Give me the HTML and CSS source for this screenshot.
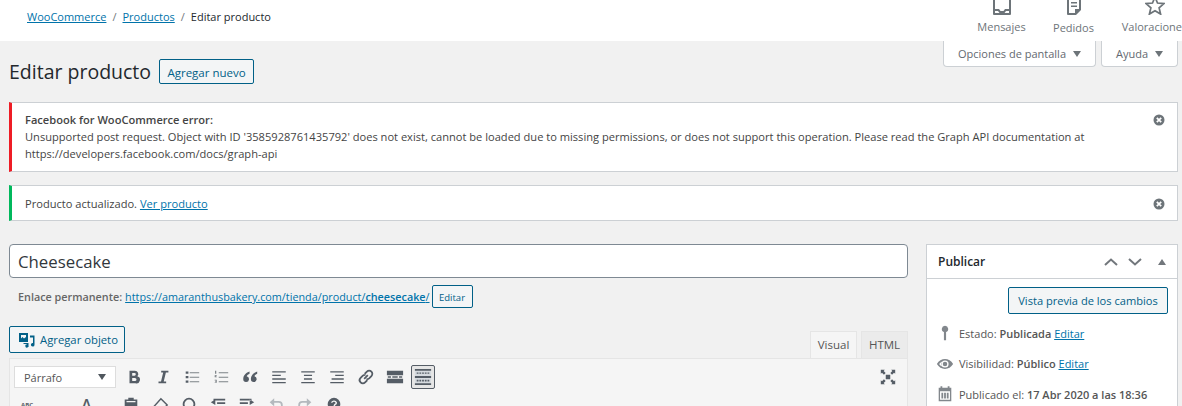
FILE: index.html
```html
<!DOCTYPE html>
<html lang="es">
<head>
  <meta charset="UTF-8" />
  <title>Editar producto</title>
  <link rel="stylesheet" href="styles.css">
</head>
<body>

<header class="topbar">
  <nav class="crumbs">
    <a href="#">WooCommerce</a><span class="sep">/</span><a href="#">Productos</a><span class="sep">/</span><span>Editar producto</span>
  </nav>
  <div class="activity">
    <div class="activity-item item-msg">
      <svg class="activity-icon" viewBox="0 -5 20 20"><path d="M2 -3h16a1 1 0 0 1 1 1v16a1 1 0 0 1-1 1H2a1 1 0 0 1-1-1V-2a1 1 0 0 1 1-1zM3 -1v10h4l1.500 2h3L13 9h4V-1zM3 11v2h14v-2h-3l-1.500 2h-5L6 11z" fill="#6d7479" fill-rule="evenodd"/></svg>
      <span>Mensajes</span>
    </div>
    <div class="activity-item item-ped">
      <svg class="activity-icon" viewBox="0 -5 20 20"><path d="M3 -4h14v14l-5 5H4a1 1 0 0 1-1-1zM5 -2v15h6V9h4V-2zM7 2h6v1.500H7zM7 5.500h6V7H7z" fill="#6d7479" fill-rule="evenodd"/></svg>
      <span>Pedidos</span>
    </div>
    <div class="activity-item item-val">
      <svg class="activity-icon" viewBox="0 -5 20 20"><path d="M10 -3l2.500 6 6.500.6-4.900 4.200 1.500 6.300L10 10.700l-5.600 3.400 1.500-6.300L1 3.600 7.500 3z" fill="none" stroke="#6d7479" stroke-width="1.700"/></svg>
      <span>Valoraciones</span>
    </div>
  </div>
</header>

<main class="wrap">
  <div class="head-row">
    <h1>Editar producto</h1>
    <a href="#" class="btn btn-new">Agregar nuevo</a>
    <div class="screen-meta">
      <div class="meta-tab tab-options">Opciones de pantalla<i class="caret"></i></div>
      <div class="meta-tab tab-help">Ayuda<i class="caret"></i></div>
    </div>
  </div>

  <section class="notice notice-error">
    <div class="notice-text">
      <strong>Facebook for WooCommerce error:</strong><br>
      Unsupported post request. Object with ID '3585928761435792' does not exist, cannot be loaded due to missing permissions, or does not support this operation. Please read the Graph API documentation at https://developers.facebook.com/docs/graph-api
    </div>
    <svg class="dismiss" viewBox="0 0 12 12"><circle cx="6" cy="6" r="5.500" fill="#6d7479"/><path d="M3.800 3.800l4.400 4.400M8.200 3.800l-4.400 4.400" stroke="#fff" stroke-width="1.700"/></svg>
  </section>

  <section class="notice notice-success">
    <div class="notice-text">Producto actualizado. <a href="#">Ver producto</a></div>
    <svg class="dismiss" viewBox="0 0 12 12"><circle cx="6" cy="6" r="5.500" fill="#6d7479"/><path d="M3.800 3.800l4.400 4.400M8.200 3.800l-4.400 4.400" stroke="#fff" stroke-width="1.700"/></svg>
  </section>

  <div class="columns">
    <div class="col-main">
      <div class="title-input">Cheesecake</div>
      <div class="permalink">
        <strong>Enlace permanente:</strong>
        <a href="#">https://amaranthusbakery.com/tienda/product/<b>cheesecake</b>/</a>
        <span class="btn btn-small">Editar</span>
      </div>

      <div class="editor-tools">
        <a href="#" class="btn btn-media">
          <svg viewBox="0 0 18 18" width="18" height="18"><path d="M1 2h9v9H1zM3 4v3.500l1.500-1.500 1.500 1.500L8 6V4z" fill="#016087" fill-rule="evenodd"/><path d="M12 4.500h4.500v9.200a1.800 1.800 0 1 1-1.500-1.700V6.500h-3zM5.500 12h5v2.200a1.700 1.700 0 1 1-1.500-1V13H5.500z" fill="#016087"/></svg>
          Agregar objeto
        </a>
        <div class="editor-tabs">
          <span class="editor-tab active">Visual</span>
          <span class="editor-tab">HTML</span>
        </div>
      </div>

      <div class="editor">
        <div class="toolbar">
          <div class="format-select">Párrafo<i class="caret dark"></i></div>
          <div class="tool"><svg viewBox="0 0 20 20"><path d="M5 3h6a3.700 3.700 0 0 1 2.700 6.300A4 4 0 0 1 11.500 17H5zM8 5.500v3h2.500a1.500 1.500 0 0 0 0-3zM8 11v3.500h3a1.750 1.750 0 0 0 0-3.500z" fill="#555d66" fill-rule="evenodd"/></svg></div>
          <div class="tool"><svg viewBox="0 0 20 20"><path d="M8 3h8v2h-2.800l-2.400 10H13.500v2H5v-2h2.800l2.400-10H8z" fill="#555d66"/></svg></div>
          <div class="tool"><svg viewBox="0 0 20 20"><path d="M3 4h3v2.500H3zM3 9h3v2.500H3zM3 14h3v2.500H3z" fill="#555d66"/><path d="M7.500 4.600H18v1.300H7.500zM7.500 9.600H18v1.300H7.500zM7.500 14.600H18v1.300H7.500z" fill="#7c8287"/></svg></div>
          <div class="tool"><svg viewBox="0 0 20 20"><path d="M3.500 3h1.200v3.500H3.500zM3 8h2.200v.9H4v.5h1.200v.8H3zM3 13h2.200v3.500H3v-.8h1.300v-.5H3.400v-.6h.9v-.8H3z" fill="#6d7479"/><path d="M7.500 4.600H18v1.300H7.500zM7.500 9.600H18v1.300H7.500zM7.500 14.600H18v1.300H7.500z" fill="#7c8287"/></svg></div>
          <div class="tool"><svg viewBox="0 0 20 20"><path d="M9.500 4C6 5 2.500 8 2.500 12.500a3.200 3.200 0 1 0 3.800-3.200c.5-1.300 1.800-2.500 3.200-3zM18 4c-3.500 1-7 4-7 8.500a3.200 3.200 0 1 0 3.800-3.200c.5-1.300 1.800-2.500 3.200-3z" fill="#555d66"/></svg></div>
          <div class="tool"><svg viewBox="0 0 20 20"><path d="M2.500 3.500h15V5h-15zM2.500 7.500h9.500V9H2.500zM2.500 11.500h15V13h-15zM2.500 15.500h15V17h-15z" fill="#555d66"/></svg></div>
          <div class="tool"><svg viewBox="0 0 20 20"><path d="M2.500 3.500h15V5h-15zM5.500 7.500h9V9h-9zM5.500 11.500h9V13h-9zM2.500 15.500h15V17h-15z" fill="#555d66"/></svg></div>
          <div class="tool"><svg viewBox="0 0 20 20"><path d="M2.500 3.500h15V5h-15zM8 7.500h9.500V9H8zM4 11.500h13.500V13H4zM2.500 15.500h15V17h-15z" fill="#555d66"/></svg></div>
          <div class="tool"><svg viewBox="0 0 20 20"><path d="M8 12l4-4M8.500 6.500L11 4a3.500 3.500 0 0 1 5 5l-2.500 2.500a3.500 3.500 0 0 1-3 .8M11.500 13.500L9 16a3.500 3.500 0 0 1-5-5l2.500-2.500a3.500 3.500 0 0 1 3-.8" fill="none" stroke="#555d66" stroke-width="2"/></svg></div>
          <div class="tool"><svg viewBox="0 0 20 20"><path d="M1 3h18v5H1zM1 12h18v5H1zM2 9.300h3.500v1.400H2zM7 9.300h6v1.400H7zM14.500 9.300H18v1.400h-3.500z" fill="#555d66"/></svg></div>
          <div class="tool tool-on"><svg viewBox="0 0 20 20"><path d="M1 1h18v18H1z" fill="#d5dadf"/><path d="M1 1h18v2H1zM1 9h18v2H1zM1 17h18v2H1zM3 5h2v1.500H3zM6 5h2v1.500H6zM9 5h2v1.500H9zM12 5h2v1.500h-2zM15 5h2v1.500h-2zM3 13h2v2H3zM6 13h2v2H6zM9 13h2v2H9zM12 13h2v2h-2zM15 13h2v2h-2z" fill="#555d66"/></svg></div>
          <div class="tool tool-full"><svg viewBox="0 0 20 20"><path d="M7.500 7.500h5v5h-5zM2 2h4.500L5.200 3.300l2.200 2.200-1.900 1.900-2.200-2.200L2 6.500zM18 2v4.500l-1.300-1.300-2.200 2.200-1.900-1.900 2.200-2.200L13.500 2zM2 18v-4.500l1.300 1.300 2.200-2.200 1.900 1.900-2.200 2.200L6.500 18zM18 18h-4.500l1.300-1.300-2.200-2.200 1.900-1.900 2.200 2.200 1.300-1.300z" fill="#555d66"/></svg></div>
        </div>
        <div class="toolbar toolbar-second">
          <div class="tool tool-abc">ABC</div>
          <div class="tool tool-color">A</div>
          <div class="tool"><svg viewBox="0 0 20 20"><path d="M3 4h4V2h6v2h4v14H3zM5 5.500V7h10V5.500z" fill="#555d66" fill-rule="evenodd"/></svg></div>
          <div class="tool"><svg viewBox="0 0 20 20"><path d="M11 3l7 7-6 6H7l-4-4z" fill="none" stroke="#555d66" stroke-width="1.600"/></svg></div>
          <div class="tool"><svg viewBox="0 0 20 20"><circle cx="10" cy="9" r="6" fill="none" stroke="#555d66" stroke-width="2"/></svg></div>
          <div class="tool"><svg viewBox="0 0 20 20"><path d="M5 3h13v2H5zM9 7h9v2H9zM2 7l5-3v6z" fill="#555d66"/></svg></div>
          <div class="tool"><svg viewBox="0 0 20 20"><path d="M2 3h13v2H2zM2 7h9v2H2zM18 7l-5-3v6z" fill="#555d66"/></svg></div>
          <div class="tool"><svg viewBox="0 0 20 20"><path d="M3 7l5-4.500v3h5a4.500 4.500 0 0 1 4.500 4.500v3h-2v-3A2.500 2.500 0 0 0 13 7.500H8v4z" fill="#b4b9be"/></svg></div>
          <div class="tool"><svg viewBox="0 0 20 20"><path d="M17 7l-5-4.500v3H7A4.500 4.500 0 0 0 2.500 10v3h2v-3A2.500 2.500 0 0 1 7 7.500h5v4z" fill="#b4b9be"/></svg></div>
          <div class="tool"><svg viewBox="0 0 20 20"><circle cx="10" cy="9" r="7" fill="#555d66"/><path d="M7.500 7.500a2.500 2 0 1 1 3.500 2L10 11" fill="none" stroke="#f5f5f5" stroke-width="1.600"/></svg></div>
        </div>
      </div>
    </div>

    <aside class="postbox">
      <div class="postbox-head">
        <h2>Publicar</h2>
        <svg class="handle" viewBox="0 0 16 10"><path d="M2 8l6-5.500L14 8" fill="none" stroke="#72777c" stroke-width="2"/></svg>
        <svg class="handle" viewBox="0 0 16 10"><path d="M2 2l6 5.500L14 2" fill="none" stroke="#72777c" stroke-width="2"/></svg>
        <i class="caret up"></i>
      </div>
      <div class="postbox-body">
        <div class="preview-row"><a href="#" class="btn btn-preview">Vista previa de los cambios</a></div>
        <div class="misc">
          <svg viewBox="0 0 20 20"><path d="M10 2a3.500 3.500 0 0 1 1.200 6.800V18H8.800V8.800A3.500 3.500 0 0 1 10 2z" fill="#82878c"/></svg>
          <span>Estado: <b>Publicada</b> <a href="#">Editar</a></span>
        </div>
        <div class="misc">
          <svg viewBox="0 0 20 20"><path d="M1 10c2-3.500 5.500-5.500 9-5.500s7 2 9 5.500c-2 3.500-5.500 5.500-9 5.500S3 13.500 1 10zM10 6a4 4 0 1 0 0 8 4 4 0 0 0 0-8zM3.500 10a11 11 0 0 0 3 2.800 5 5 0 0 1 0-5.600 11 11 0 0 0-3 2.800z" fill="#82878c" fill-rule="evenodd"/><circle cx="10" cy="10" r="2.500" fill="#82878c"/></svg>
          <span>Visibilidad: <b>Público</b> <a href="#">Editar</a></span>
        </div>
        <div class="misc">
          <svg viewBox="0 0 20 20"><path d="M3 3h2V1.500h2V3h6V1.500h2V3h2v15H3zM4.500 7v9.500h11V7zM6 8.500h2V15H6zM9 8.500h2V15H9zM12 8.500h2V15h-2z" fill="#82878c" fill-rule="evenodd"/></svg>
          <span>Publicado el: <b>17 Abr 2020 a las 18:36</b></span>
        </div>
      </div>
    </aside>
  </div>
</main>

</body>
</html>
```

FILE: styles.css
```css
html, body {
  height: 406px;
  overflow: hidden;
}

body {
  margin: 0;
  background-color: #f1f1f1;
  color: #444;
  font-family: 'Open Sans', 'Noto Sans', sans-serif;
  font-size: 11px;
  line-height: 17px;
}

a {
  color: #0073aa;
}

.topbar {
  display: flex;
  justify-content: space-between;
  height: 41px;
  background-color: #fff;
}

.crumbs {
  padding: 8px 0 0 27px;
  color: #23282d;
}

.crumbs .sep {
  margin: 0 6px;
  color: #72777c;
}

.activity {
  display: flex;
  margin-right: -8px;
  color: #6d7479;
  height: 41px;
  overflow: hidden;
}

.activity-item {
  display: flex;
  flex-direction: column;
  align-items: center;
  width: 71px;
}

.item-ped {
  width: 73px;
}

.item-val {
  margin-left: 9px;
}

.activity-icon {
  width: 20px;
  height: 20px;
  margin-top: -5px;
}

.activity-item span {
  margin-top: 3px;
  white-space: nowrap;
}

.item-ped span {
  margin-top: 4px;
}

.wrap {
  padding: 0 4px 0 9px;
}

.head-row {
  display: flex;
  align-items: flex-start;
  height: 61px;
}

h1 {
  margin: 14px 8px 0 0;
  color: #23282d;
  font-size: 19.500px;
  font-weight: 400;
  line-height: 34px;
}

.btn {
  display: inline-block;
  box-sizing: border-box;
  border: 1px solid #016087;
  border-radius: 2px;
  background-color: #f3f5f6;
  color: #016087;
  text-decoration: none;
  white-space: nowrap;
}

.btn-new {
  margin-top: 18px;
  width: 95px;
  height: 25px;
  text-align: center;
  font-size: 11.500px;
  line-height: 25px;
}

.screen-meta {
  display: flex;
  gap: 5px;
  margin-left: auto;
}

.meta-tab {
  display: flex;
  align-items: center;
  justify-content: center;
  box-sizing: border-box;
  height: 26px;
  border: 1px solid #ccd0d4;
  border-top: none;
  border-radius: 0 0 4px 4px;
  background-color: #fff;
  color: #646970;
}

.tab-options {
  width: 153px;
}

.tab-help {
  width: 77px;
}

.caret {
  width: 0;
  height: 0;
  margin-left: 7px;
  border-left: 4px solid transparent;
  border-right: 4px solid transparent;
  border-top: 6px solid #6d7479;
}

.caret.dark {
  margin-left: auto;
  margin-right: 4px;
  border-left-width: 4.500px;
  border-right-width: 4.500px;
  border-top-color: #50575e;
}

.caret.up {
  margin-left: 15px;
  border-top: none;
  border-bottom: 6px solid #72777c;
}

.notice {
  display: flex;
  align-items: flex-start;
  justify-content: space-between;
  box-sizing: border-box;
  margin-bottom: 13px;
  padding: 8px 12px 0 13px;
  border: 1px solid #ccd0d4;
  border-left-width: 3px;
  background-color: #fff;
  color: #444;
}

.notice-error {
  height: 70px;
  border-left-color: #ee1c25;
}

.notice-success {
  height: 36px;
  border-left-color: #00b85c;
  padding-top: 9px;
  margin-bottom: 23px;
}

.notice-text {
  width: 1110px;
  font-size: 11.100px;
}

.notice-text strong {
  font-weight: 600;
}

.dismiss {
  flex: none;
  width: 12px;
  height: 12px;
  margin-top: 3px;
}

.columns {
  display: grid;
  grid-template-columns: 899px 252px;
  gap: 18px;
}

.title-input {
  box-sizing: border-box;
  height: 34px;
  padding-left: 8px;
  border: 1px solid #7e8993;
  border-radius: 4px;
  background-color: #fff;
  color: #32373c;
  font-size: 16.800px;
  line-height: 33px;
}

.permalink {
  display: flex;
  align-items: center;
  gap: 3px;
  height: 23px;
  margin-top: 7px;
  padding-left: 9px;
  font-size: 10.800px;
  color: #666;
}

.permalink strong {
  font-weight: 600;
}

.permalink b {
  font-weight: 600;
}

.btn-small {
  width: 41px;
  height: 23px;
  margin-left: -1px;
  text-align: center;
  font-size: 9.500px;
  line-height: 23px;
}

.editor-tools {
  display: flex;
  justify-content: space-between;
  align-items: flex-end;
  height: 32px;
  margin-top: 18px;
}

.btn-media {
  display: flex;
  align-items: center;
  gap: 4px;
  height: 27px;
  width: 116px;
  padding-left: 8px;
  margin-bottom: 5px;
  font-size: 11.300px;
}

.editor-tabs {
  display: flex;
  gap: 4px;
}

.editor-tab {
  box-sizing: border-box;
  width: 47px;
  height: 27px;
  border: 1px solid #e5e5e5;
  border-bottom: none;
  background-color: #ebebeb;
  color: #555;
  text-align: center;
  font-size: 11.500px;
  line-height: 26px;
}

.editor-tab.active {
  height: 28px;
  margin-bottom: -1px;
  background-color: #f5f5f5;
}

.editor {
  position: relative;
  border: 1px solid #e5e5e5;
  border-bottom: none;
  background-color: #f5f5f5;
  height: 60px;
}

.toolbar {
  display: flex;
  align-items: center;
  height: 24px;
  padding: 6px 0 0 4px;
}

.toolbar-second {
  padding-top: 4px;
}

.format-select {
  display: flex;
  align-items: center;
  box-sizing: border-box;
  width: 102px;
  height: 22px;
  margin-right: 3px;
  padding: 0 5px 0 9px;
  border: 1px solid #ddd;
  background-color: #fff;
  color: #555;
}

.tool {
  flex: none;
  display: flex;
  align-items: center;
  justify-content: center;
  box-sizing: border-box;
  width: 29px;
  height: 24px;
}

.tool svg {
  width: 18px;
  height: 18px;
}

.tool-on {
  width: 24px;
  margin-left: 2px;
  border: 1px solid #555d66;
  border-radius: 2px;
  background-color: #e6e6e6;
}

.tool-full {
  margin-left: auto;
  margin-right: 5px;
}

.tool-abc {
  width: 26px;
  margin-right: 32px;
  font-size: 6px;
  font-weight: 700;
  color: #555d66;
}

.tool-color {
  margin-right: 15px;
  font-size: 16px;
  font-weight: 600;
  color: #555d66;
}

.postbox {
  height: 200px;
  box-sizing: border-box;
  border: 1px solid #ccd0d4;
  background-color: #fff;
}

.postbox-head {
  display: flex;
  align-items: center;
  height: 33px;
  padding: 0 11px;
  border-bottom: 1px solid #ccd0d4;
}

.postbox-head h2 {
  margin: 0 auto 0 0;
  color: #23282d;
  font-size: 12px;
  font-weight: 600;
}

.handle {
  width: 16px;
  height: 10px;
  margin-left: 8px;
}

.postbox-body {
  padding: 8px 9px 0 11px;
}

.preview-row {
  display: flex;
  justify-content: flex-end;
}

.btn-preview {
  width: 160px;
  height: 27px;
  text-align: center;
  font-size: 11.100px;
  line-height: 25px;
}

.misc {
  display: flex;
  align-items: center;
  gap: 5px;
  height: 30.500px;
  margin-left: -2px;
  color: #555;
}

.preview-row + .misc {
  margin-top: 4px;
}

.misc svg {
  flex: none;
  width: 18px;
  height: 18px;
}

.misc b {
  font-weight: 600;
}
```
